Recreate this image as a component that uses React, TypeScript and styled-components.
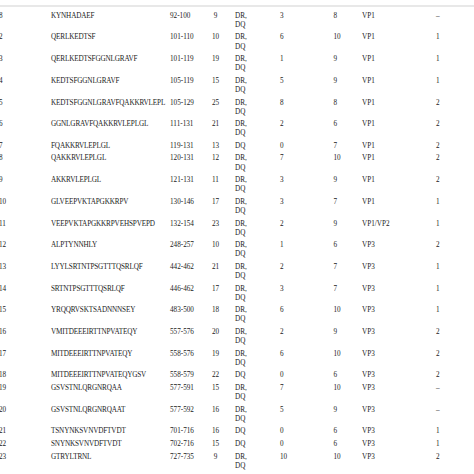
import React from "react";
import styled, { createGlobalStyle } from "styled-components";

const GlobalStyle = createGlobalStyle`
  html, body {
    margin: 0;
    padding: 0;
    background: #ffffff;
  }
  body {
    font-family: "Liberation Serif", "Times New Roman", serif;
    overflow: hidden;
  }
`;

const Page = styled.div`
  width: 474px;
  height: 474px;
  padding-top: 5px;
  box-sizing: border-box;
  overflow: hidden;
`;

const Table = styled.div`
  margin-left: -1px;
  padding: 3px 0 1.5px;
  border-top: 2px solid #e8e8e8;
  border-bottom: 2px solid #ececec;
`;

const Row = styled.div`
  display: grid;
  grid-template-columns: 52px 119px 26px 39px 45px 53.5px 28.5px 74px 1fr;
  padding: 1.75px 0;
  font-size: 7.2px;
  line-height: 9.1px;
  color: #222222;
`;

const Cell = styled.div<{ $center?: boolean }>`
  text-align: ${(p) => (p.$center ? "center" : "left")};
  white-space: nowrap;
`;

const Sequence = styled(Cell)`
  letter-spacing: -0.15px;
`;

const Line = styled.span`
  display: block;
`;

type Peptide = {
  id: string;
  seq: string;
  pos: string;
  len: number;
  allele: string;
  a: number;
  b: number;
  protein: string;
  score: string;
};

const rows: Peptide[] = [
  { id: "8", seq: "KYNHADAEF", pos: "92-100", len: 9, allele: "DR, DQ", a: 3, b: 8, protein: "VP1", score: "–" },
  { id: "2", seq: "QERLKEDTSF", pos: "101-110", len: 10, allele: "DR, DQ", a: 6, b: 10, protein: "VP1", score: "1" },
  { id: "3", seq: "QERLKEDTSFGGNLGRAVF", pos: "101-119", len: 19, allele: "DR, DQ", a: 1, b: 9, protein: "VP1", score: "1" },
  { id: "4", seq: "KEDTSFGGNLGRAVF", pos: "105-119", len: 15, allele: "DR, DQ", a: 5, b: 9, protein: "VP1", score: "1" },
  { id: "5", seq: "KEDTSFGGNLGRAVFQAKKRVLEPL", pos: "105-129", len: 25, allele: "DR, DQ", a: 8, b: 8, protein: "VP1", score: "2" },
  { id: "6", seq: "GGNLGRAVFQAKKRVLEPLGL", pos: "111-131", len: 21, allele: "DR, DQ", a: 2, b: 6, protein: "VP1", score: "2" },
  { id: "7", seq: "FQAKKRVLEPLGL", pos: "119-131", len: 13, allele: "DQ", a: 0, b: 7, protein: "VP1", score: "2" },
  { id: "8", seq: "QAKKRVLEPLGL", pos: "120-131", len: 12, allele: "DR, DQ", a: 7, b: 10, protein: "VP1", score: "2" },
  { id: "9", seq: "AKKRVLEPLGL", pos: "121-131", len: 11, allele: "DR, DQ", a: 3, b: 9, protein: "VP1", score: "2" },
  { id: "10", seq: "GLVEEPVKTAPGKKRPV", pos: "130-146", len: 17, allele: "DR, DQ", a: 3, b: 7, protein: "VP1", score: "1" },
  { id: "11", seq: "VEEPVKTAPGKKRPVEHSPVEPD", pos: "132-154", len: 23, allele: "DR, DQ", a: 2, b: 9, protein: "VP1/VP2", score: "1" },
  { id: "12", seq: "ALPTYNNHLY", pos: "248-257", len: 10, allele: "DR, DQ", a: 1, b: 6, protein: "VP3", score: "2" },
  { id: "13", seq: "LYYLSRTNTPSGTTTQSRLQF", pos: "442-462", len: 21, allele: "DR, DQ", a: 2, b: 7, protein: "VP3", score: "1" },
  { id: "14", seq: "SRTNTPSGTTTQSRLQF", pos: "446-462", len: 17, allele: "DR, DQ", a: 3, b: 7, protein: "VP3", score: "1" },
  { id: "15", seq: "YRQQRVSKTSADNNNSEY", pos: "483-500", len: 18, allele: "DR, DQ", a: 6, b: 10, protein: "VP3", score: "1" },
  { id: "16", seq: "VMITDEEEIRTTNPVATEQY", pos: "557-576", len: 20, allele: "DR, DQ", a: 2, b: 9, protein: "VP3", score: "2" },
  { id: "17", seq: "MITDEEEIRTTNPVATEQY", pos: "558-576", len: 19, allele: "DR, DQ", a: 6, b: 10, protein: "VP3", score: "2" },
  { id: "18", seq: "MITDEEEIRTTNPVATEQYGSV", pos: "558-579", len: 22, allele: "DQ", a: 0, b: 6, protein: "VP3", score: "2" },
  { id: "19", seq: "GSVSTNLQRGNRQAA", pos: "577-591", len: 15, allele: "DR, DQ", a: 7, b: 10, protein: "VP3", score: "–" },
  { id: "20", seq: "GSVSTNLQRGNRQAAT", pos: "577-592", len: 16, allele: "DR, DQ", a: 5, b: 9, protein: "VP3", score: "–" },
  { id: "21", seq: "TSNYNKSVNVDFTVDT", pos: "701-716", len: 16, allele: "DQ", a: 0, b: 6, protein: "VP3", score: "1" },
  { id: "22", seq: "SNYNKSVNVDFTVDT", pos: "702-716", len: 15, allele: "DQ", a: 0, b: 6, protein: "VP3", score: "1" },
  { id: "23", seq: "GTRYLTRNL", pos: "727-735", len: 9, allele: "DR, DQ", a: 10, b: 10, protein: "VP3", score: "2" },
];

export default function App() {
  return (
    <>
      <GlobalStyle />
      <Page>
        <Table>
          {rows.map((r, i) => (
            <Row key={i}>
              <Cell>{r.id}</Cell>
              <Sequence>{r.seq}</Sequence>
              <Cell>{r.pos}</Cell>
              <Cell $center>{r.len}</Cell>
              <Cell>
                {r.allele.split(" ").map((part) => (
                  <Line key={part}>{part}</Line>
                ))}
              </Cell>
              <Cell>{r.a}</Cell>
              <Cell>{r.b}</Cell>
              <Cell>{r.protein}</Cell>
              <Cell>{r.score}</Cell>
            </Row>
          ))}
        </Table>
      </Page>
    </>
  );
}
